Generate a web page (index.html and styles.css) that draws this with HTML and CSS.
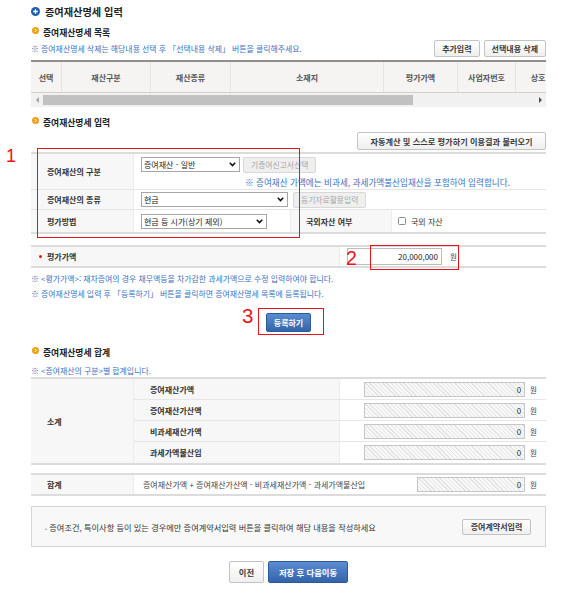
FILE: index.html
```html
<!DOCTYPE html>
<html lang="ko">
<head>
<meta charset="utf-8">
<title>증여재산명세 입력</title>
<link rel="stylesheet" href="styles.css">
</head>
<body>
<div class="page">
  <h1 class="title">
    <svg class="ico-plus" width="9" height="9" viewBox="0 0 9 9"><circle cx="4.5" cy="4.5" r="4.5" fill="#1f5fab"/><path d="M2.2 4.5h4.6M4.5 2.2v4.6" stroke="#fff" stroke-width="1.3"/></svg>
    <span>증여재산명세 입력</span>
  </h1>

  <h2 class="sub">
    <svg class="ico-dot" width="7" height="7" viewBox="0 0 7 7"><circle cx="3.5" cy="3.5" r="3.5" fill="#f0a018"/><path d="M2.8 2l1.5 1.5-1.5 1.5" fill="none" stroke="#fff" stroke-width="1"/></svg>
    <span>증여재산명세 목록</span>
  </h2>

  <div class="toolbar">
    <p class="note">※ 증여재산명세 삭제는 해당내용 선택 후 「선택내용 삭제」 버튼을 클릭해주세요.</p>
    <div class="btn-group">
      <button class="btn" type="button">추가입력</button>
      <button class="btn" type="button">선택내용 삭제</button>
    </div>
  </div>

  <div class="grid">
    <div class="grid-head">
      <div class="gc gc-sel">선택</div>
      <div class="gc gc-kind">재산구분</div>
      <div class="gc gc-type">재산종류</div>
      <div class="gc gc-loc">소재지</div>
      <div class="gc gc-amt">평가가액</div>
      <div class="gc gc-biz">사업자번호</div>
      <div class="gc gc-name">상호</div>
    </div>
    <div class="hscroll">
      <div class="arrbox"><span class="arr arr-l"></span></div>
      <div class="track"><div class="thumb"></div></div>
      <div class="arrbox"><span class="arr arr-r"></span></div>
    </div>
  </div>

  <h2 class="sub sub2">
    <svg class="ico-dot" width="7" height="7" viewBox="0 0 7 7"><circle cx="3.5" cy="3.5" r="3.5" fill="#f0a018"/><path d="M2.8 2l1.5 1.5-1.5 1.5" fill="none" stroke="#fff" stroke-width="1"/></svg>
    <span>증여재산명세 입력</span>
  </h2>

  <div class="autobar">
    <button class="btn btn-auto" type="button">자동계산 및 스스로 평가하기 이용결과 불러오기</button>
  </div>

  <div class="form">
    <div class="frow r1">
      <div class="th">증여재산의 구분</div>
      <div class="td td-col">
        <div class="line">
          <div class="sel w-kind"><span>증여재산 - 일반</span><svg class="chev" width="7" height="5" viewBox="0 0 7 5"><path d="M0.8 0.8l2.7 2.7 2.7-2.7" fill="none" stroke="#111" stroke-width="1.6"/></svg></div>
          <button class="btn-dis" type="button">기증여신고서선택</button>
        </div>
        <p class="note note-in">※ 증여재산 가액에는 비과세, 과세가액불산입재산을 포함하여 입력합니다.</p>
      </div>
    </div>
    <div class="frow r2">
      <div class="th">증여재산의 종류</div>
      <div class="td gap5">
        <div class="sel w-type"><span>현금</span><svg class="chev" width="7" height="5" viewBox="0 0 7 5"><path d="M0.8 0.8l2.7 2.7 2.7-2.7" fill="none" stroke="#111" stroke-width="1.6"/></svg></div>
        <button class="btn-dis" type="button">등기자료활용입력</button>
      </div>
    </div>
    <div class="frow r3">
      <div class="th">평가방법</div>
      <div class="td td-narrow">
        <div class="sel w-method"><span>현금 등 시가(상기 제외)</span><svg class="chev" width="7" height="5" viewBox="0 0 7 5"><path d="M0.8 0.8l2.7 2.7 2.7-2.7" fill="none" stroke="#111" stroke-width="1.6"/></svg></div>
      </div>
      <div class="th th2">국외자산 여부</div>
      <div class="td td-chk"><span class="box"></span><span>국외 자산</span></div>
    </div>
  </div>

  <div class="amount">
    <div class="th th-amt"><span class="req"></span>평가가액</div>
    <div class="td td-amt"><span class="inp">20,000,000</span><span class="unit">원</span></div>
  </div>

  <div class="notes">
    <p class="note">※ &lt;평가가액&gt;: 재차증여의 경우 채무액등을 차가감한 과세가액으로 수정 입력하여야 합니다.</p>
    <p class="note">※ 증여재산명세 입력 후 「등록하기」 버튼을 클릭하면 증여재산명세 목록에 등록됩니다.</p>
  </div>

  <div class="center">
    <button class="btn-blue btn-reg" type="button">등록하기</button>
  </div>

  <h2 class="sub sub3">
    <svg class="ico-dot" width="7" height="7" viewBox="0 0 7 7"><circle cx="3.5" cy="3.5" r="3.5" fill="#f0a018"/><path d="M2.8 2l1.5 1.5-1.5 1.5" fill="none" stroke="#fff" stroke-width="1"/></svg>
    <span>증여재산명세 합계</span>
  </h2>
  <p class="note sum-note">※ &lt;증여재산의 구분&gt;별 합계입니다.</p>

  <div class="sum">
    <div class="th th-sum">소계</div>
    <div class="sum-rows">
      <div class="srow"><div class="th th-wide">증여재산가액</div><div class="td td-right"><span class="ro ro-l">0</span><span class="unit">원</span></div></div>
      <div class="srow"><div class="th th-wide">증여재산가산액</div><div class="td td-right"><span class="ro ro-l">0</span><span class="unit">원</span></div></div>
      <div class="srow"><div class="th th-wide">비과세재산가액</div><div class="td td-right"><span class="ro ro-l">0</span><span class="unit">원</span></div></div>
      <div class="srow"><div class="th th-wide">과세가액불산입</div><div class="td td-right"><span class="ro ro-l">0</span><span class="unit">원</span></div></div>
    </div>
  </div>

  <div class="total">
    <div class="th th-sum">합계</div>
    <div class="td formula">증여재산가액 + 증여재산가산액 - 비과세재산가액 - 과세가액불산입</div>
    <div class="td td-right"><span class="ro ro-s">0</span><span class="unit">원</span></div>
  </div>

  <div class="guide">
    <p><span class="dot">•</span> 증여조건, 특이사항 등이 있는 경우에만 증여계약서입력 버튼을 클릭하여 해당 내용을 작성하세요</p>
    <button class="btn btn-guide" type="button">증여계약서입력</button>
  </div>

  <div class="foot">
    <button class="btn btn-lg btn-prev" type="button">이전</button>
    <button class="btn-blue btn-lg btn-next" type="button">저장 후 다음이동</button>
  </div>

  <div class="anno-box anno-b1"></div>
  <div class="anno-box anno-b2"></div>
  <div class="anno-box anno-b3"></div>
  <span class="anno-num anno-n1">1</span>
  <span class="anno-num anno-n2">2</span>
  <span class="anno-num anno-n3">3</span>
</div>
</body>
</html>
```

FILE: styles.css
```css
* { box-sizing: border-box; margin: 0; padding: 0; }

body {
  margin: 0;
  background: #fff;
  color: #333;
  font-family: "Noto Sans CJK KR", "Noto Sans", sans-serif;
  font-size: 8px;
}

button { font-family: inherit; cursor: pointer; }

.page {
  position: relative;
  width: 570px;
  height: 596px;
  padding: 4px 24px 0 31px;
  overflow: hidden;
}

/* headings */
.title {
  display: flex;
  align-items: center;
  gap: 5px;
  height: 14px;
  font-size: 10.2px;
  font-weight: bold;
  color: #222;
}
.ico-plus { flex: none; }

.sub {
  display: flex;
  align-items: center;
  gap: 4px;
  height: 12px;
  margin-top: 8px;
  font-size: 8.8px;
  font-weight: bold;
  color: #222;
}
.ico-dot { flex: none; margin-left: 1px; margin-bottom: 3px; }
.sub2 { margin-top: 9px; }
.sub3 { margin-top: 14px; }

/* notes */
.note {
  font-size: 7.9px;
  line-height: 15px;
  color: #3a72c2;
  white-space: nowrap;
}

/* toolbar */
.toolbar {
  display: flex;
  align-items: center;
  justify-content: space-between;
  height: 17px;
  margin-top: 2px;
}
.btn-group { display: flex; gap: 4px; }

.btn {
  height: 17px;
  padding: 0 7px;
  border: 1px solid #c3c3c3;
  border-radius: 2px;
  background: linear-gradient(#ffffff, #efefef);
  color: #3a3a3a;
  font-size: 8px;
  font-weight: bold;
  line-height: 15px;
  white-space: nowrap;
}

/* list grid */
.grid {
  margin-top: 3px;
  border-top: 2px solid #8e8e8e;
  overflow: hidden;
}
.grid-head {
  display: flex;
  height: 31px;
  background: #f5f4f2;
  border-bottom: 1px solid #cfcfcf;
}
.gc {
  flex: none;
  display: flex;
  align-items: center;
  justify-content: center;
  border-right: 1px solid #e6e4e1;
  font-weight: bold;
  color: #555;
  white-space: nowrap;
}
.gc-sel { width: 31px; }
.gc-kind { width: 89px; }
.gc-type { width: 80px; }
.gc-loc { width: 153px; }
.gc-amt { width: 74px; }
.gc-biz { width: 58px; }
.gc-name { width: 44px; border-right: none; }

.hscroll {
  display: flex;
  align-items: center;
  height: 14px;
  background: #f1f1f1;
}
.arrbox {
  flex: none;
  width: 12px;
  height: 14px;
  display: flex;
  align-items: center;
  justify-content: center;
}
.arr { width: 0; height: 0; border-top: 3px solid transparent; border-bottom: 3px solid transparent; }
.arr-l { border-right: 3px solid #a3a3a3; }
.arr-r { border-left: 3px solid #505050; }
.track { flex: 1; height: 14px; display: flex; align-items: center; }
.thumb { width: 370px; height: 10px; background: #c1c1c1; }

/* auto button */
.autobar {
  display: flex;
  justify-content: flex-end;
  margin-top: 4px;
}
.btn-auto { height: 18px; width: 189px; font-size: 8.2px; line-height: 16px; }

/* form table */
.form {
  margin-top: 2px;
  border-top: 2px solid #dcdcdc;
  border-bottom: 2px solid #dcdcdc;
}
.frow { display: flex; border-bottom: 1px solid #e6e6e6; }
.r1 { height: 36px; }
.r2 { height: 20px; }
.r3 { height: 22px; border-bottom: none; }

.th {
  flex: none;
  display: flex;
  align-items: center;
  width: 103px;
  padding-left: 16px;
  background: #f7f7f7;
  border-right: 1px solid #ececec;
  font-weight: bold;
  color: #333;
  white-space: nowrap;
}
.td {
  display: flex;
  align-items: center;
  flex: 1;
  padding-left: 7px;
  gap: 3px;
  white-space: nowrap;
}
.td-col { flex-direction: column; align-items: flex-start; justify-content: flex-start; padding-top: 3px; gap: 0; }
.line { display: flex; gap: 3px; }
.gap5 { gap: 5px; }
.note-in { margin-left: 104px; margin-top: 3px; line-height: 12px; font-size: 8.6px; }

.sel {
  display: flex;
  align-items: center;
  justify-content: space-between;
  height: 15px;
  padding: 0 3px 0 2px;
  border: 1px solid #a6a6a6;
  background: #fff;
  font-size: 8px;
  color: #222;
  white-space: nowrap;
}
.chev { flex: none; }
.w-kind { width: 99px; }
.w-type { width: 147px; }
.w-method { width: 126px; }

.btn-dis {
  height: 16px;
  padding: 0 7px;
  border: 1px solid #d8d8d8;
  border-radius: 2px;
  background: #efefef;
  color: #a8a8a8;
  font-size: 7.8px;
  line-height: 14px;
  white-space: nowrap;
}

.td-narrow { flex: none; width: 156px; }
.th2 { width: 102px; padding-left: 15px; border-left: 1px solid #ececec; }
.td-chk { padding-left: 6px; gap: 5px; color: #333; }
.box {
  width: 8px;
  height: 8px;
  border: 1px solid #8a8a8a;
  border-radius: 1.5px;
  background: #fff;
}

/* amount row */
.amount {
  display: flex;
  height: 23px;
  margin-top: 11px;
  border-top: 2px solid #dcdcdc;
  border-bottom: 2px solid #dcdcdc;
}
.th-amt { width: 309px; padding-left: 8px; }
.req { width: 3px; height: 3px; border-radius: 50%; background: #e0161d; margin-right: 5px; }
.inp {
  display: flex;
  align-items: center;
  justify-content: flex-end;
  width: 95px;
  height: 17px;
  padding-right: 3px;
  border: 1px solid #bdbdbd;
  background: #fff;
  font-size: 8px;
  color: #222;
}
.unit { margin-left: 5px; font-size: 7.5px; color: #444; }

.notes { margin-top: 3px; }

.center { display: flex; justify-content: center; margin-top: 12px; }
.btn-blue {
  border: 1px solid #2b5a9c;
  border-radius: 2px;
  background: linear-gradient(#5b8dd2, #3463a9);
  color: #fff;
  font-weight: bold;
  white-space: nowrap;
}
.btn-reg { width: 45px; height: 19px; font-size: 8px; line-height: 17px; }

.sum-note { margin-top: 7px; line-height: 12px; }

/* sum table */
.sum {
  display: flex;
  border-top: 2px solid #dcdcdc;
  border-bottom: 2px solid #dcdcdc;
}
.th-sum { width: 103px; }
.sum-rows { flex: 1; }
.srow { display: flex; height: 21px; border-bottom: 1px solid #e6e6e6; }
.srow:last-child { border-bottom: none; }
.th-wide { width: 206px; padding-left: 16px; }
.td-right { justify-content: flex-end; padding-right: 9px; padding-left: 0; gap: 0; flex: 1; }
.ro {
  display: flex;
  align-items: center;
  justify-content: flex-end;
  height: 15px;
  padding-right: 3px;
  border: 1px solid #c6c6c6;
  background: repeating-linear-gradient(45deg, #e4e4e4 0 1px, #f8f8f8 1px 3px);
  font-size: 8px;
  color: #333;
}
.ro-l { width: 161px; }
.ro-s { width: 108px; }

.total {
  display: flex;
  height: 23px;
  margin-top: 8px;
  border-top: 2px solid #dcdcdc;
  border-bottom: 2px solid #dcdcdc;
}
.formula { flex: none; padding-left: 9px; font-size: 8px; color: #444; }

/* guide box */
.guide {
  display: flex;
  align-items: center;
  justify-content: space-between;
  height: 41px;
  margin-top: 10px;
  padding: 0 14px 0 13px;
  border: 1px solid #d5d5d5;
  background: #f8f8f8;
}
.guide p { font-size: 8.2px; color: #333; white-space: nowrap; }
.dot { color: #999; font-size: 6px; }
.btn-guide { height: 16px; width: 69px; padding: 0; line-height: 14px; }

/* footer */
.foot { display: flex; justify-content: center; gap: 4px; margin-top: 14px; }
.btn-lg { height: 22px; font-size: 8.3px; line-height: 20px; }
.btn-prev { width: 35px; padding: 0; }
.btn-next { width: 80px; }

/* annotations (overlay) */
.anno-box { position: absolute; border: 1.5px solid #e8141c; }
.anno-b1 { left: 37px; top: 148px; width: 263px; height: 90px; }
.anno-b2 { left: 370px; top: 245px; width: 89px; height: 25px; }
.anno-b3 { left: 258px; top: 308px; width: 66px; height: 27px; }
.anno-num {
  position: absolute;
  font-family: "Liberation Sans", Arial, sans-serif;
  line-height: 1;
  color: #e8141c;
}
.anno-n1 { left: 6px; top: 147px; font-size: 18px; }
.anno-n2 { left: 346px; top: 249px; font-size: 19.5px; }
.anno-n3 { left: 242px; top: 306px; font-size: 20.5px; }
```
